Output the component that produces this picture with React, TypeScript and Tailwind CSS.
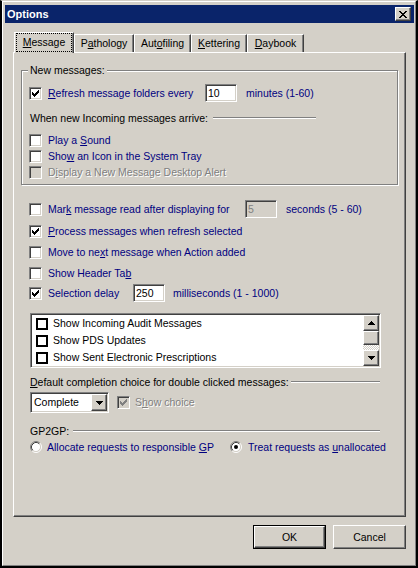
import React from "react"

const FONT = "font-['Liberation_Sans',Arial,sans-serif]"
const raised =
  "border border-t-white border-l-white border-r-[#404040] border-b-[#404040] shadow-[inset_-1px_-1px_#808080]"
const sunken =
  "border border-t-[#808080] border-l-[#808080] border-r-white border-b-white shadow-[inset_1px_1px_#404040,inset_-1px_-1px_#d4d0c8]"
const navy = "text-[#000080]"
const grayed = "text-[#808080] [text-shadow:1px_1px_0_#ffffff]"

function Tick({ color = "#000" }: { color?: string }) {
  return (
    <svg width="7" height="7" viewBox="0 0 7 7" shapeRendering="crispEdges">
      <path d="M0 2V5H1V6H2V7H3V6H4V5H5V4H6V3H7V0H6V1H5V2H4V3H3V4H2V3H1V2Z" fill={color} />
    </svg>
  )
}

function Arrow({ down }: { down?: boolean }) {
  return (
    <svg width="7" height="4" viewBox="0 0 7 4" shapeRendering="crispEdges">
      {down ? (
        <path d="M0 0h7v1h-1v1h-1v1h-1v1h-1v-1h-1v-1h-1v-1h-1z" fill="#000" />
      ) : (
        <path d="M3 0h1v1h1v1h1v1h1v1H0V3h1V2h1V1h1z" fill="#000" />
      )}
    </svg>
  )
}

function Check({ checked, disabled }: { checked?: boolean; disabled?: boolean }) {
  return (
    <span
      className={`shrink-0 w-[13px] h-[13px] flex items-center justify-center ${sunken} ${
        disabled ? "bg-[#d4d0c8]" : "bg-white"
      }`}
    >
      {checked && <Tick color={disabled ? "#808080" : "#000"} />}
    </span>
  )
}

function Radio({ checked }: { checked?: boolean }) {
  return (
    <svg width="12" height="12" viewBox="0 0 12 12" className="shrink-0">
      <circle cx="6" cy="6" r="4.5" fill="#fff" />
      <path d="M2.11 9.89A5.5 5.5 0 0 1 9.89 2.11" stroke="#808080" fill="none" />
      <path d="M9.89 2.11A5.5 5.5 0 0 1 2.11 9.89" stroke="#fff" fill="none" />
      <path d="M2.82 9.18A4.5 4.5 0 0 1 9.18 2.82" stroke="#404040" fill="none" />
      <path d="M9.18 2.82A4.5 4.5 0 0 1 2.82 9.18" stroke="#d4d0c8" fill="none" />
      {checked && <circle cx="6" cy="6" r="2" fill="#000" />}
    </svg>
  )
}

function TextBox({ value, disabled }: { value: string; disabled?: boolean }) {
  return (
    <div
      className={`shrink-0 w-[32px] h-[18px] flex items-center pl-[2px] ${sunken} ${
        disabled ? "bg-[#d4d0c8] text-[#808080]" : "bg-white text-black"
      }`}
    >
      {value}
    </div>
  )
}

function Etched() {
  return <div className="flex-1 h-[2px] border-t border-t-[#808080] border-b border-b-white" />
}

function CheckRow({
  checked,
  disabled,
  className,
  children,
}: {
  checked?: boolean
  disabled?: boolean
  className: string
  children: React.ReactNode
}) {
  return (
    <div className={`flex items-center h-[16px] ${className}`}>
      <Check checked={checked} disabled={disabled} />
      <span className={`ml-[6px] whitespace-nowrap ${disabled ? grayed : navy}`}>{children}</span>
    </div>
  )
}

function Tab({ className, children }: { className: string; children: React.ReactNode }) {
  return (
    <div
      className={`mt-[2px] h-[18px] flex items-center justify-center bg-[#d4d0c8] border-t border-l border-r border-t-white border-l-white border-r-[#404040] shadow-[inset_-1px_0_#808080] ${className}`}
    >
      {children}
    </div>
  )
}

const listItems = ["Show Incoming Audit Messages", "Show PDS Updates", "Show Sent Electronic Prescriptions"]

export default function App() {
  return (
    <div
      className={`${FONT} text-[10.5px] leading-[13px] text-black w-[418px] h-[568px] bg-[#d4d0c8] border-t border-l-2 border-r-2 border-b-2 border-black border-t-[#d4d0c8]`}
    >
      <div className="h-full flex flex-col border border-t-white border-l-white border-r-[#808080] border-b-[#808080] pt-[3px] pl-[2px] pr-[1px]">
        {/* title bar */}
        <div className="h-[18px] shrink-0 bg-[#0a246a] flex items-center justify-between pl-[2px] pr-[3px]">
          <span className="text-white font-bold text-[11px]">Options</span>
          <div className={`w-[16px] h-[14px] bg-[#d4d0c8] flex items-center justify-center ${raised}`}>
            <svg width="8" height="7" viewBox="0 0 8 7" shapeRendering="crispEdges">
              <path
                d="M0 0h2v1H0z M6 0h2v1H6z M1 1h2v1H1z M5 1h2v1H5z M2 2h4v1H2z M3 3h2v1H3z M2 4h4v1H2z M1 5h2v1H1z M5 5h2v1H5z M0 6h2v1H0z M6 6h2v1H6z"
                fill="#000"
              />
            </svg>
          </div>
        </div>

        <div className="flex flex-col pl-[8px] pr-[8px]">
          {/* tabs */}
          <div className="mt-[9px] h-[20px] flex items-start pl-[1px]">
            <div className="relative z-10 w-[60px] h-[21px] flex bg-[#d4d0c8] border-t border-l border-r border-t-white border-l-white border-r-[#404040] shadow-[inset_-1px_0_#808080] pl-[1px] pr-[1px] pb-[1px]">
              <span className="flex-1 flex items-center justify-center border border-dotted border-black">
                <span><span className="underline">M</span>essage</span>
              </span>
            </div>
            <Tab className="w-[60px]">
              <span>P<span className="underline">a</span>thology</span>
            </Tab>
            <Tab className="w-[57px]">
              <span>Aut<span className="underline">o</span>filing</span>
            </Tab>
            <Tab className="w-[56px]">
              <span><span className="underline">K</span>ettering</span>
            </Tab>
            <Tab className="w-[57px]">
              <span><span className="underline">D</span>aybook</span>
            </Tab>
          </div>

          {/* panel */}
          <div className="h-[465px] flex flex-col px-[7px] bg-[#d4d0c8] border border-t-white border-l-white border-r-[#404040] border-b-[#404040] shadow-[inset_-1px_-1px_#808080]">
            <div className="mt-[17px] flex flex-col pb-[4px] border border-[#808080] shadow-[inset_1px_1px_#ffffff,1px_1px_#ffffff]">
              <span className="-mt-[7px] ml-[6px] px-[2px] w-fit h-[13px] bg-[#d4d0c8]">New messages:</span>
              <div className="mt-[7px] h-[18px] flex items-center pl-[7px]">
                <Check checked />
                <span className={`ml-[6px] w-[157px] ${navy}`}>
                  <span className="underline">R</span>efresh message folders every
                </span>
                <TextBox value="10" />
                <span className={`ml-[9px] ${navy}`}>minutes (1-60)</span>
              </div>
              <div className="mt-[9px] h-[14px] flex items-center ml-[8px] w-[286px]">
                <span className="whitespace-nowrap">When new Incoming messages arrive:</span>
                <div className="ml-[5px] flex-1 flex">
                  <Etched />
                </div>
              </div>
              <CheckRow className="mt-[7px] pl-[7px]">
                Play a <span className="underline">S</span>ound
              </CheckRow>
              <CheckRow className="pl-[7px]">
                Sho<span className="underline">w</span> an Icon in the System Tray
              </CheckRow>
              <CheckRow className="pl-[7px]" disabled>
                D<span className="underline">i</span>splay a New Message Desktop Alert
              </CheckRow>
            </div>

            <div className="mt-[15px] h-[18px] flex items-center pl-[8px]">
              <Check />
              <span className={`ml-[6px] w-[197px] ${navy}`}>
                Mar<span className="underline">k</span> message read after displaying for
              </span>
              <TextBox value="5" disabled />
              <span className={`ml-[9px] ${navy}`}>seconds (5 - 60)</span>
            </div>
            <CheckRow className="mt-[5px] pl-[8px]" checked>
              <span className="underline">P</span>rocess messages when refresh selected
            </CheckRow>
            <CheckRow className="mt-[5px] pl-[8px]">
              Move to ne<span className="underline">x</span>t message when Action added
            </CheckRow>
            <CheckRow className="mt-[5px] pl-[8px]">
              Show Header Ta<span className="underline">b</span>
            </CheckRow>
            <div className="mt-[3px] h-[18px] flex items-center pl-[8px]">
              <Check checked />
              <span className={`ml-[6px] w-[85px] ${navy}`}>Selection delay</span>
              <TextBox value="250" />
              <span className={`ml-[8px] ${navy}`}>milliseconds (1 - 1000)</span>
            </div>

            {/* list */}
            <div className={`mt-[11px] ml-[9px] w-[351px] h-[55px] p-[1px] flex bg-white ${sunken}`}>
              <div className="flex-1 flex flex-col">
                {listItems.map((item) => (
                  <div key={item} className="h-[17px] flex items-center pl-[4px]">
                    <span className="w-[12px] h-[12px] border-2 border-black bg-white shrink-0" />
                    <span className="ml-[5px]">{item}</span>
                  </div>
                ))}
              </div>
              <div className="w-[16px] flex flex-col">
                <div className={`h-[16px] bg-[#d4d0c8] flex items-center justify-center ${raised}`}>
                  <Arrow />
                </div>
                <div className={`h-[14px] bg-[#d4d0c8] ${raised}`} />
                <div className="flex-1 bg-[repeating-conic-gradient(#d4d0c8_0_25%,#ffffff_0_50%)] bg-[length:2px_2px]" />
                <div className={`h-[16px] bg-[#d4d0c8] flex items-center justify-center ${raised}`}>
                  <Arrow down />
                </div>
              </div>
            </div>

            <div className="mt-[7px] h-[14px] ml-[9px] w-[350px] flex items-center">
              <span className="whitespace-nowrap">
                <span className="underline">D</span>efault completion choice for double clicked messages:
              </span>
              <div className="ml-[2px] flex-1 flex">
                <Etched />
              </div>
            </div>
            <div className="mt-[3px] h-[21px] ml-[9px] flex items-center">
              <div className={`w-[79px] h-[21px] p-[1px] flex bg-white ${sunken}`}>
                <span className="flex-1 flex items-center pl-[2px]">Complete</span>
                <div className={`w-[16px] bg-[#d4d0c8] flex items-center justify-center ${raised}`}>
                  <Arrow down />
                </div>
              </div>
              <div className="ml-[8px] flex items-center">
                <Check checked disabled />
                <span className={`ml-[5px] ${grayed}`}>
                  S<span className="underline">h</span>ow choice
                </span>
              </div>
            </div>

            <div className="mt-[11px] h-[14px] ml-[9px] w-[350px] flex items-center">
              <span>GP2GP:</span>
              <div className="ml-[4px] flex-1 flex">
                <Etched />
              </div>
            </div>
            <div className="mt-[1px] h-[16px] ml-[9px] flex items-center">
              <div className="w-[200px] flex items-center">
                <Radio />
                <span className={`ml-[5px] ${navy}`}>
                  Allocate requests to responsible <span className="underline">G</span>P
                </span>
              </div>
              <Radio checked />
              <span className={`ml-[6px] ${navy}`}>
                Treat requests as <span className="underline">u</span>nallocated
              </span>
            </div>
          </div>

          {/* buttons */}
          <div className="mt-[8px] flex justify-end gap-[7px]">
            <div className="w-[73px] h-[24px] border border-black flex">
              <div className={`flex-1 flex items-center justify-center bg-[#d4d0c8] ${raised}`}>OK</div>
            </div>
            <div className={`w-[73px] h-[24px] flex items-center justify-center bg-[#d4d0c8] ${raised}`}>
              Cancel
            </div>
          </div>
        </div>
      </div>
    </div>
  )
}
